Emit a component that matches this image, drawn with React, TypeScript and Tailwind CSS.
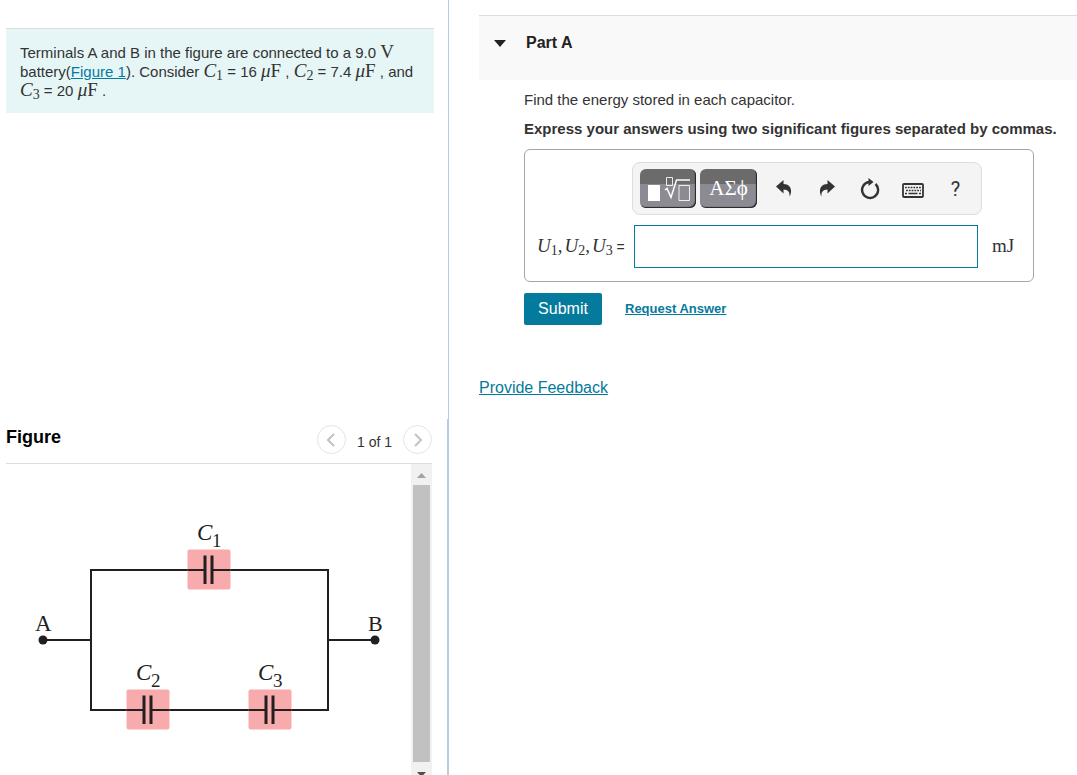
import React from "react";

type MathVarProps = {
  name: string;
  index: number;
};

const MathVar: React.FC<MathVarProps> = ({ name, index }) => (
  <span className="font-['Liberation_Serif',serif] text-[19px] leading-[0px]">
    <i>{name}</i>
    <sub className="bottom-[-3px] text-[14px]">{index}</sub>
  </span>
);

const MicroFarad: React.FC = () => (
  <span className="font-['Liberation_Serif',serif] text-[19px] leading-[0px]">
    <i>μ</i>F
  </span>
);

const Comma: React.FC = () => (
  <span className="mr-0.5 font-['Liberation_Serif',serif] text-[19px] leading-[0px]">,</span>
);

const Problem: React.FC = () => (
  <section className="mt-7 mr-3.5 ml-1.5 border-t border-[#dcdfe0] bg-[#e6f6f7] px-3.5 pt-3.5 pb-[13px] text-[15px] leading-[19px]">
    <p>
      Terminals A and B in the figure are connected to a 9.0{" "}
      <span className="font-['Liberation_Serif',serif] text-[19px] leading-[0px]">V</span>
      <br />
      battery(
      <a href="#figure" className="text-[#047a9c] underline">
        Figure 1
      </a>
      ). Consider <MathVar name="C" index={1} /> = 16 <MicroFarad /> , <MathVar name="C" index={2} /> = 7.4{" "}
      <MicroFarad /> , and
      <br />
      <MathVar name="C" index={3} /> = 20 <MicroFarad /> .
    </p>
  </section>
);

type CapacitorProps = {
  x: number;
  y: number;
  index: number;
};

const Capacitor: React.FC<CapacitorProps> = ({ x, y, index }) => (
  <g>
    <rect x={x - 21.5} y={y - 20.5} width="43" height="40" rx="2" fill="#f7abad" />
    <path d={`M${x - 21.5} ${y}H${x - 4}M${x + 3} ${y}H${x + 21.5}`} stroke="#231f20" strokeWidth="2" />
    <path d={`M${x - 4} ${y - 14.5}V${y + 14}M${x + 3} ${y - 14.5}V${y + 14}`} stroke="#231f20" strokeWidth="3" />
    <text x={x - 12} y={y - 30} fontSize="23" fontStyle="italic">
      C
    </text>
    <text x={x + 3} y={y - 23} fontSize="19">
      {index}
    </text>
  </g>
);

const Circuit: React.FC = () => (
  <svg
    viewBox="0 0 405 311"
    className="h-[311px] w-[405px] shrink-0 font-['Liberation_Serif',serif]"
    fill="#231f20"
    role="img"
    aria-label="Capacitor circuit between terminals A and B"
  >
    <path d="M37 176H85M322 176H369M85 106H322V246H85Z" fill="none" stroke="#231f20" strokeWidth="2" />
    <circle cx="37" cy="176" r="4.5" />
    <circle cx="369" cy="176" r="4.5" />
    <text x="29" y="167" fontSize="23">
      A
    </text>
    <text x="362" y="167" fontSize="22">
      B
    </text>
    <Capacitor x={203} y={106} index={1} />
    <Capacitor x={142} y={246} index={2} />
    <Capacitor x={264} y={246} index={3} />
  </svg>
);

const Scrollbar: React.FC = () => (
  <div className="flex w-[21px] shrink-0 flex-col items-center bg-[#f1f1f1]" aria-hidden="true">
    <svg viewBox="0 0 21 21" className="h-[21px] w-[21px] shrink-0" fill="#a3a3a3">
      <path d="M6 14h9l-4.500-5z" />
    </svg>
    <div className="w-[17px] flex-1 bg-[#c1c1c1]" />
    <svg viewBox="0 0 21 13" className="h-[13px] w-[21px] shrink-0" fill="#505050">
      <path d="M6 10h9l-4.500 5z" />
    </svg>
  </div>
);

const Figure: React.FC = () => (
  <section id="figure" className="flex flex-1 flex-col border-r-2 border-[#b9cbdf] pr-[15px] pl-1.5">
    <div className="flex h-[45px] items-start justify-between border-b border-[#dddddd]">
      <h2 className="pt-1.5 text-[18px] leading-6 font-bold text-black">Figure</h2>
      <div className="flex items-center pt-1.5">
        <button
          aria-label="Previous figure"
          className="flex h-[29px] w-[29px] items-center justify-center rounded-full border border-[#e4e4e4]"
        >
          <svg viewBox="0 0 10 14" className="h-3.5 w-2.5" fill="none" stroke="#c2c2c2" strokeWidth="2">
            <path d="M8 1L2 7l6 6" />
          </svg>
        </button>
        <span className="px-[11px] pt-1 text-sm leading-5">1 of 1</span>
        <button
          aria-label="Next figure"
          className="flex h-[29px] w-[29px] items-center justify-center rounded-full border border-[#e4e4e4]"
        >
          <svg viewBox="0 0 10 14" className="h-3.5 w-2.5" fill="none" stroke="#c2c2c2" strokeWidth="2">
            <path d="M2 1l6 6-6 6" />
          </svg>
        </button>
      </div>
    </div>
    <div className="flex flex-1 overflow-hidden">
      <Circuit />
      <Scrollbar />
    </div>
  </section>
);

const UndoIcon: React.FC = () => (
  <svg viewBox="0 0 16 18" className="h-[18px] w-4" fill="#333333">
    <path d="M0 6.500L7.500 0v4c5 0 8 3 7.500 8-.2 2-.8 3.500-1.500 4.500.5-4-1.200-7-6-7v4z" />
  </svg>
);

const RedoIcon: React.FC = () => (
  <svg viewBox="0 0 16 18" className="h-[18px] w-4" fill="#333333">
    <path d="M16 6.500L8.500 0v4c-5 0-8 3-7.500 8 .2 2 .8 3.500 1.500 4.500-.5-4 1.200-7 6-7v4z" />
  </svg>
);

const ResetIcon: React.FC = () => (
  <svg viewBox="0 0 20 22" className="h-[22px] w-5" fill="none">
    <path d="M15.500 6A8 8 0 1 1 9 4" stroke="#333333" strokeWidth="2.400" />
    <path d="M8.500 0l5 4-5 4z" fill="#333333" />
  </svg>
);

const KeyboardIcon: React.FC = () => (
  <svg viewBox="0 0 22 15" className="mt-1 h-[15px] w-[22px]" fill="none" stroke="#333333">
    <rect x="1" y="1" width="20" height="13" rx="1" strokeWidth="1.800" />
    <path d="M3 4.500h16" strokeWidth="1.500" strokeDasharray="1.800 1" />
    <path d="M4 7.500h15" strokeWidth="1.500" strokeDasharray="1.800 1" />
    <path d="M3 10.500h2M6.500 10.500h9M17 10.500h2" strokeWidth="1.500" />
  </svg>
);

const tools = [
  { label: "Undo", icon: <UndoIcon /> },
  { label: "Redo", icon: <RedoIcon /> },
  { label: "Reset", icon: <ResetIcon /> },
  { label: "Keyboard shortcuts", icon: <KeyboardIcon /> },
  { label: "Help", icon: <span className="font-['Roboto',sans-serif] text-xl leading-none">?</span> },
];

const templateButton =
  "flex h-[39px] items-center justify-center rounded-md bg-linear-to-b from-[#6b6b6b] from-38% to-[#8c8b94] to-38% text-white shadow-[inset_-1px_-1px_1px_#222222]";

const Toolbar: React.FC = () => (
  <div className="flex h-[53px] w-[350px] items-center rounded-lg border border-[#dddddd] bg-[#f4f4f4] pl-[7px]">
    <button aria-label="Templates" className={`${templateButton} w-14`}>
      <svg viewBox="0 0 44 26" className="h-[26px] w-11" fill="none" stroke="#ffffff">
        <path d="M2 9h12v16H2z" fill="#ffffff" stroke="none" />
        <path d="M20.500 1.500h6v8h-6z" strokeOpacity="0.85" />
        <path d="M19 14l2-1.500 4 9L30.500 4H44" strokeWidth="1.500" />
        <path d="M33 9.500h10.500v15H33z" strokeOpacity="0.85" />
      </svg>
    </button>
    <button aria-label="Symbols" className={`${templateButton} ml-1 w-[57px] font-['Liberation_Serif',serif] text-[21px]`}>
      ΑΣϕ
    </button>
    <div className="ml-[5px] flex">
      {tools.map((tool) => (
        <button key={tool.label} aria-label={tool.label} className="flex h-9 w-[43px] items-center justify-center">
          {tool.icon}
        </button>
      ))}
    </div>
  </div>
);

const AnswerBox: React.FC = () => (
  <div className="mt-2.5 w-[510px] rounded-md border border-[#a6a6a6] px-3 pt-3 pb-[13px]">
    <div className="pl-[95px]">
      <Toolbar />
    </div>
    <div className="mt-2.5 flex items-center">
      <label htmlFor="answer" className="w-[97px] text-sm whitespace-nowrap">
        <MathVar name="U" index={1} />
        <Comma />
        <MathVar name="U" index={2} />
        <Comma />
        <MathVar name="U" index={3} /> =
      </label>
      <input id="answer" type="text" className="h-[43px] w-[344px] border border-[#047a9c] bg-white px-2" />
      <span className="ml-3.5 font-['Liberation_Serif',serif] text-[19px]">mJ</span>
    </div>
  </div>
);

const PartA: React.FC = () => (
  <main className="min-w-0 flex-1 pt-[15px] pl-[30px]">
    <h2 className="h-[65px] border-t border-[#dddddd] bg-[#f9f9f9] pt-[15px]">
      <button className="flex items-center pl-[15px] text-base leading-6 font-bold text-[#222222]">
        <svg viewBox="0 0 12 7" className="mr-5 h-[7px] w-3" fill="#222222">
          <path d="M0 0h12L6 7z" />
        </svg>
        Part A
      </button>
    </h2>
    <div className="pt-2.5 pl-[45px]">
      <p className="text-[15px] leading-5">Find the energy stored in each capacitor.</p>
      <p className="mt-[9px] text-[15px] leading-5 font-bold">
        Express your answers using two significant figures separated by commas.
      </p>
      <AnswerBox />
      <div className="mt-[11px] flex items-center">
        <button className="h-8 w-[78px] rounded-xs bg-[#047a9c] text-base text-white">Submit</button>
        <a href="#request" className="ml-[23px] text-[13px] font-bold text-[#047a9c] underline">
          Request Answer
        </a>
      </div>
    </div>
    <a href="#feedback" className="mt-[51px] inline-block text-base leading-6 text-[#047a9c] underline">
      Provide Feedback
    </a>
  </main>
);

export default function App() {
  return (
    <div className="flex min-h-screen bg-white font-['Liberation_Sans',sans-serif] text-[#333333]">
      <div className="flex w-[449px] shrink-0 flex-col">
        <div className="h-[419px] border-r border-[#b9cbdf]">
          <Problem />
        </div>
        <Figure />
      </div>
      <PartA />
    </div>
  );
}
